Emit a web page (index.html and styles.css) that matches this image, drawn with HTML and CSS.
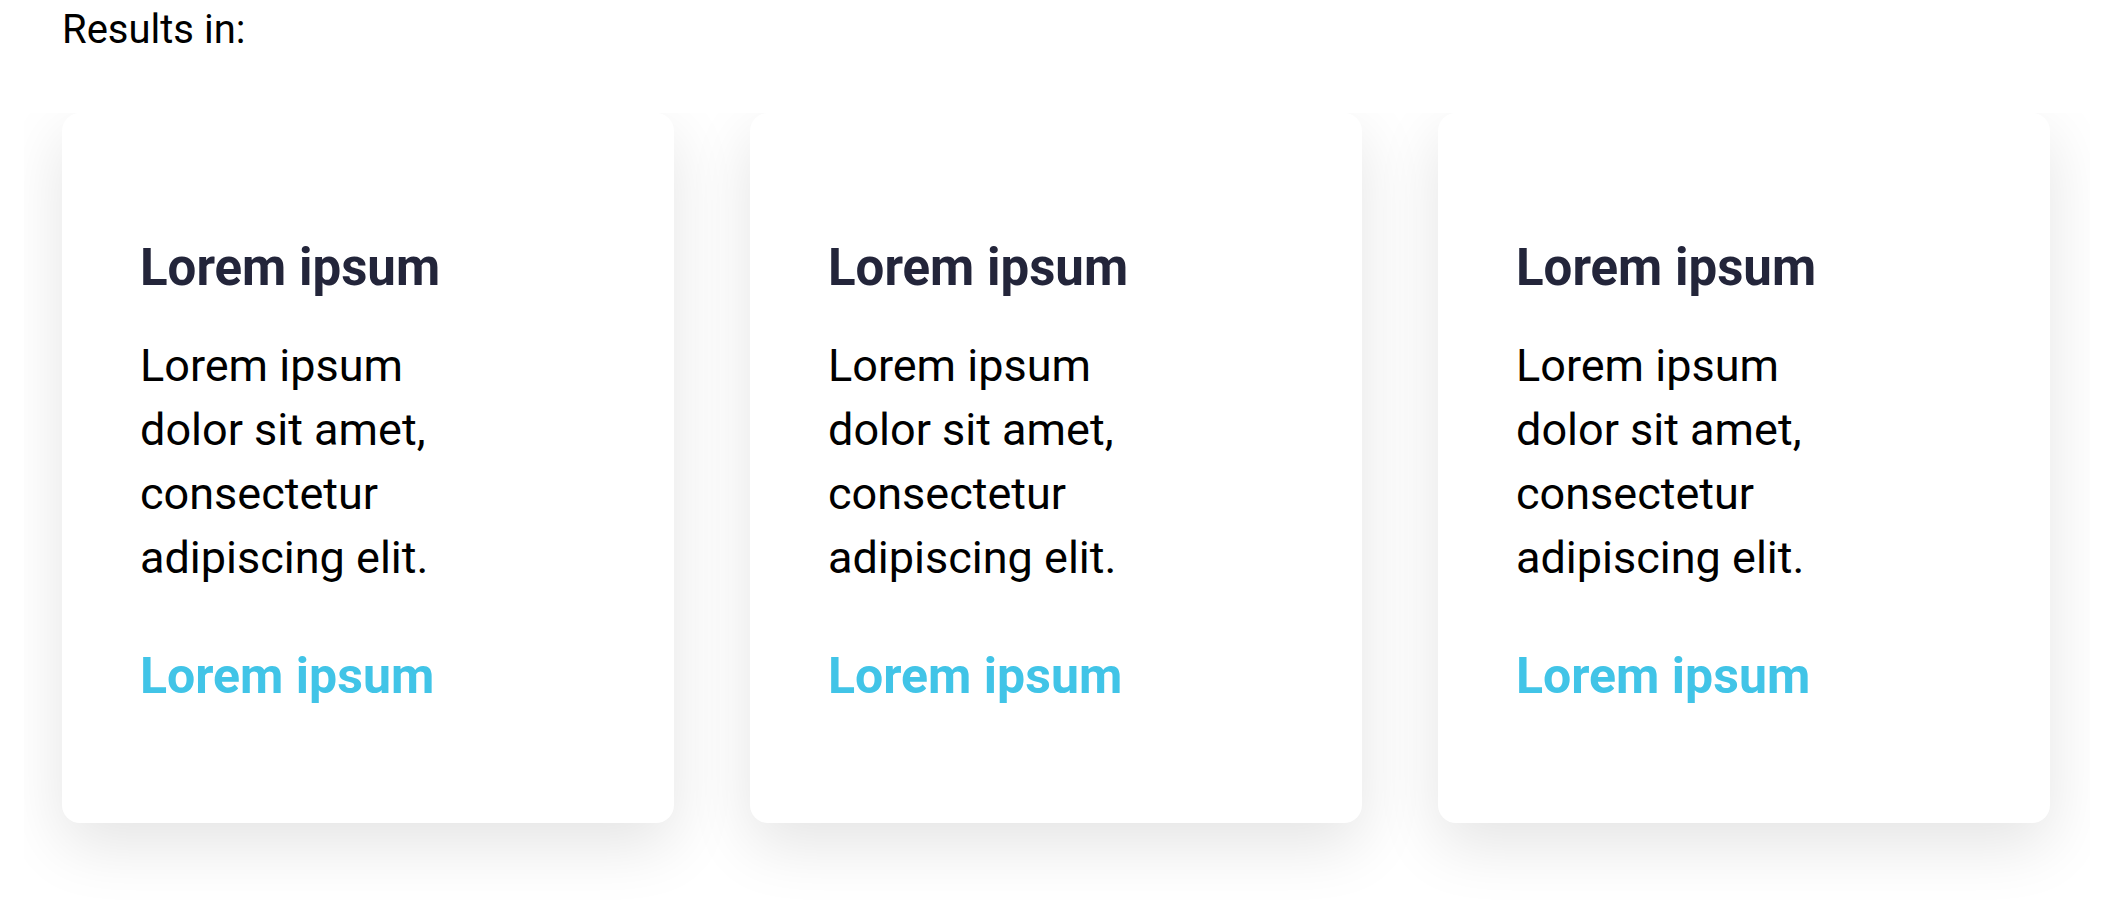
FILE: index.html
```html
<!DOCTYPE html>
<html>
<head>
<meta charset="utf-8">
<link rel="stylesheet" href="styles.css">
</head>
<body>
<p class="intro">Results in:</p>
<div class="scroller">
  <div class="cards">
    <div class="card">
      <h2 class="card-title">Lorem ipsum</h2>
      <p class="card-text">Lorem ipsum<br>dolor sit amet,<br>consectetur<br>adipiscing elit.</p>
      <a class="card-link" href="#">Lorem ipsum</a>
    </div>
    <div class="card">
      <h2 class="card-title">Lorem ipsum</h2>
      <p class="card-text">Lorem ipsum<br>dolor sit amet,<br>consectetur<br>adipiscing elit.</p>
      <a class="card-link" href="#">Lorem ipsum</a>
    </div>
    <div class="card">
      <h2 class="card-title">Lorem ipsum</h2>
      <p class="card-text">Lorem ipsum<br>dolor sit amet,<br>consectetur<br>adipiscing elit.</p>
      <a class="card-link" href="#">Lorem ipsum</a>
    </div>
  </div>
</div>
</body>
</html>
```

FILE: styles.css
```css
html, body {
  margin: 0;
  padding: 0;
  background: #ffffff;
  font-family: Roboto, "Liberation Sans", sans-serif;
  overflow: hidden;
}

.intro {
  margin: 0;
  padding: 6px 0 0 62px;
  height: 113px;
  box-sizing: border-box;
  font-size: 40px;
  line-height: 48px;
  color: #000;
}

.scroller {
  margin-left: 24px;
  width: 2066px;
  height: 808px;
  overflow: hidden;
}

.cards {
  display: flex;
  gap: 76px;
  padding: 0 38px;
}

.card {
  width: 612px;
  height: 710px;
  box-sizing: border-box;
  background: #fff;
  border-radius: 18px;
  box-shadow: 0 22px 64px rgba(0, 0, 0, 0.11);
  padding: 125px 78px 0 78px;
  display: flex;
  flex-direction: column;
  align-items: flex-start;
}

.card-title {
  margin: 0;
  font-size: 51px;
  line-height: 60px;
  font-weight: 700;
  color: #23253a;
}

.card-text {
  margin: 36px 0 0 0;
  font-size: 45px;
  line-height: 64px;
  color: #000;
}

.card-link {
  margin-top: 56px;
  font-size: 50px;
  line-height: 60px;
  font-weight: 700;
  color: #41c4e7;
  text-decoration: none;
}
```
